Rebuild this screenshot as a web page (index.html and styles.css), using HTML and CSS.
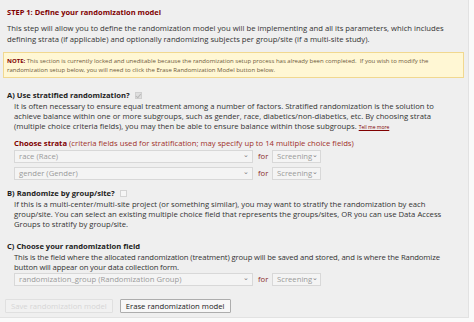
FILE: index.html
```html
<!DOCTYPE html>
<html lang="en">
<head>
  <meta charset="UTF-8">
  <title>Randomization setup</title>
  <link rel="stylesheet" href="styles.css">
</head>
<body>

<div id="panel">
  <div class="step-title">STEP 1: Define your randomization model</div>
  <p class="intro">This step will allow you to define the randomization model you will be implementing and all its parameters, which includes defining strata (if applicable) and optionally randomizing subjects per group/site (if a multi-site study).</p>

  <div class="note"><b>NOTE:</b> This section is currently locked and uneditable because the randomization setup process has already been completed.&nbsp; If you wish to modify the randomization setup below, you will need to click the Erase Randomization Model button below.</div>

  <!-- A) strata -->
  <div class="sec-head">A) Use stratified randomization? <span class="chk checked"></span></div>
  <div class="sec-body">
    <p>It is often necessary to ensure equal treatment among a number of factors. Stratified randomization is the solution to achieve balance within one or more subgroups, such as gender, race, diabetics/non-diabetics, etc. By choosing strata (multiple choice criteria fields), you may then be able to ensure balance within those subgroups. <a class="more" href="#">Tell me more</a></p>
    <div class="strata-label"><b>Choose strata</b> (criteria fields used for stratification; may specify up to 14 multiple choice fields)</div>
    <div class="field-row">
      <div class="sel field-sel">race (Race)<span class="arrow">&#8964;</span></div>
      <span class="for">for</span>
      <div class="sel event-sel">Screening<span class="arrow">&#8964;</span></div>
    </div>
    <div class="field-row">
      <div class="sel field-sel">gender (Gender)<span class="arrow">&#8964;</span></div>
      <span class="for">for</span>
      <div class="sel event-sel">Screening<span class="arrow">&#8964;</span></div>
    </div>
  </div>

  <!-- B) group/site -->
  <div class="sec-head after-fields">B) Randomize by group/site? <span class="chk"></span></div>
  <div class="sec-body">
    <p>If this is a multi-center/multi-site project (or something similar), you may want to stratify the randomization by each group/site. You can select an existing multiple choice field that represents the groups/sites, OR you can use Data Access Groups to stratify by group/site.</p>
  </div>

  <!-- C) randomization field -->
  <div class="sec-head">C) Choose your randomization field</div>
  <div class="sec-body">
    <p class="tight">This is the field where the allocated randomization (treatment) group will be saved and stored, and is where the Randomize button will appear on your data collection form.</p>
    <div class="field-row flush">
      <div class="sel field-sel">randomization_group (Randomization Group)<span class="arrow">&#8964;</span></div>
      <span class="for">for</span>
      <div class="sel event-sel">Screening<span class="arrow">&#8964;</span></div>
    </div>
  </div>

  <div class="buttons">
    <button class="btn" disabled>Save randomization model</button>
    <button class="btn">Erase randomization model</button>
  </div>
</div>

</body>
</html>
```

FILE: styles.css
```css
body {
  margin: 0;
  background-color: #fafafa;
  font-family: 'Open Sans', sans-serif;
  color: #333;
}
#panel {
  width: 469px;
  height: 318px;
  box-sizing: border-box;
  background-color: #efefef;
  border-right: 1px solid #e2e2e2;
  border-bottom: 1px solid #e2e2e2;
  padding: 6px 0 0 0;
  overflow: hidden;
}
.step-title {
  margin: 0 0 0 7px;
  font-size: 7.5px;
  line-height: 12px;
  font-weight: bold;
  color: #800000;
}
.intro {
  margin: 5px 6px 0 7px;
  font-size: 7.7px;
  line-height: 11px;
}
.note {
  margin: 7px 4px 0 3px;
  padding: 4px 4px 2px 3px;
  background-color: #fff7d4;
  border: 1px solid #f1d88f;
  font-size: 6px;
  line-height: 9px;
  color: #6e5a3c;
}
.note b {
  color: #800000;
}
.sec-head {
  margin: 12px 0 0 7px;
  font-size: 7.6px;
  line-height: 11px;
  font-weight: bold;
  color: #222;
  display: flex;
  align-items: center;
  gap: 5px;
}
.sec-head.after-fields {
  margin-top: 8px;
}
.sec-body {
  margin: 0 8px 0 14px;
  font-size: 7.7px;
}
.sec-body p {
  margin: 0;
  line-height: 10.2px;
}
.sec-body p.tight {
  letter-spacing: -0.12px;
}
.more {
  font-size: 5px;
  letter-spacing: 0;
  color: #800000;
}
.chk {
  display: inline-block;
  width: 7px;
  height: 7px;
  box-sizing: border-box;
  border: 1px solid #d4d4d4;
  background-color: #f6f6f6;
  position: relative;
}
.chk.checked {
  background-color: #dedede;
  border-color: #cfcfcf;
}
.chk.checked::after {
  content: "";
  position: absolute;
  left: 1.5px;
  top: 0;
  width: 2px;
  height: 3.5px;
  border-right: 1px solid #b8b8b8;
  border-bottom: 1px solid #b8b8b8;
  transform: rotate(40deg);
}
.strata-label {
  margin-top: 5px;
  line-height: 11px;
  color: #a0302a;
}
.strata-label b {
  color: #800000;
}
.field-row {
  display: flex;
  align-items: center;
  margin-top: 1px;
}
.field-row + .field-row {
  margin-top: 4px;
}
.field-row.flush {
  margin-top: 0;
}
.sel {
  height: 13px;
  box-sizing: border-box;
  border: 1px solid #d8d8d8;
  background-color: #f4f4f4;
  color: #9a9a9a;
  font-size: 7.7px;
  line-height: 11px;
  padding: 0 3px 0 4px;
  display: flex;
  justify-content: space-between;
}
.field-sel {
  width: 239px;
}
.event-sel {
  width: 49px;
}
.arrow {
  color: #777;
  font-size: 7px;
  line-height: 8px;
}
.for {
  margin: 0 1px 0 5px;
  width: 13px;
  color: #8b2b2b;
  font-size: 7.7px;
}
.buttons {
  display: flex;
  gap: 7px;
  margin: 13px 0 0 5px;
}
.btn {
  height: 14px;
  padding: 0 5px;
  font-family: 'Open Sans', sans-serif;
  font-size: 7.7px;
  line-height: 12px;
  background-color: #f7f7f7;
  border: 1px solid #adadad;
  border-radius: 1px;
  color: #222;
}
.btn:disabled {
  color: #d6d6d6;
  border-color: #e0e0e0;
  background-color: #f1f1f1;
}
```
